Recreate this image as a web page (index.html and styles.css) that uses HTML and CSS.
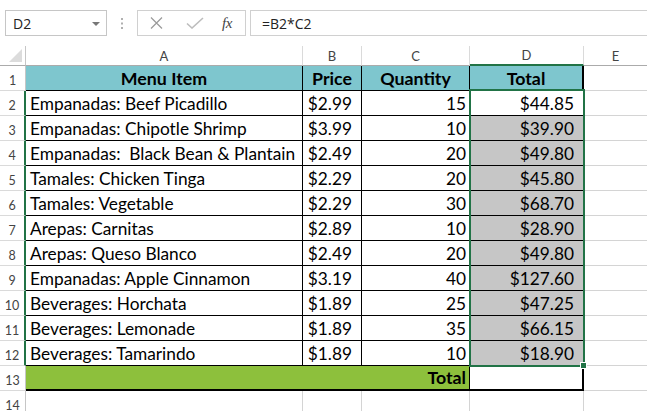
FILE: index.html
```html
<!DOCTYPE html>
<html>
<head>
<meta charset="utf-8">
<link rel="stylesheet" href="styles.css">
</head>
<body>
<div class="app">
  <div class="fbar">
    <div class="namebox"><span>D2</span><svg class="caret" width="8" height="4" viewBox="0 0 8 4"><path d="M0 0H8L4 4Z" fill="#777"/></svg></div>
    <div class="dots"><svg width="3" height="11" viewBox="0 0 3 11"><rect x="0" y="0" width="2" height="2" fill="#b0b0b0"/><rect x="0" y="4.5" width="2" height="2" fill="#b0b0b0"/><rect x="0" y="9" width="2" height="2" fill="#b0b0b0"/></svg></div>
    <div class="fnbox">
      <svg class="ic-x" width="13" height="12" viewBox="0 0 13 12"><path d="M1 0.5L12 11.5M12 0.5L1 11.5" stroke="#9a9a9a" stroke-width="1.2" fill="none"/></svg>
      <svg class="ic-ok" width="18" height="12" viewBox="0 0 18 12"><path d="M1 6.5L6 11L17 1" stroke="#bdbdbd" stroke-width="1.6" fill="none"/></svg>
      <span class="fx">fx</span>
    </div>
    <div class="formula">=B2*C2</div>
  </div>

  <div class="sheet">
    <div class="h corner"><svg width="13" height="13" viewBox="0 0 13 13"><path d="M13 0V13H0Z" fill="#dcdcdc"/></svg></div>
    <div class="h">A</div><div class="h">B</div><div class="h">C</div><div class="h hsel">D</div><div class="h">E</div>

    <div class="rh">1</div>
    <div class="c t th">Menu Item</div><div class="c t th">Price</div><div class="c t th">Quantity</div><div class="c t th dr">Total</div><div class="c"></div>

    <div class="rh sel">2</div>
    <div class="c t">Empanadas: Beef Picadillo</div><div class="c t r">$2.99</div><div class="c t n">15</div><div class="c t r">$44.85</div><div class="c"></div>

    <div class="rh sel">3</div>
    <div class="c t">Empanadas: Chipotle Shrimp</div><div class="c t r">$3.99</div><div class="c t n">10</div><div class="c t r g">$39.90</div><div class="c"></div>

    <div class="rh sel">4</div>
    <div class="c t">Empanadas:&nbsp; Black Bean &amp; Plantain</div><div class="c t r">$2.49</div><div class="c t n">20</div><div class="c t r g">$49.80</div><div class="c"></div>

    <div class="rh sel">5</div>
    <div class="c t">Tamales: Chicken Tinga</div><div class="c t r">$2.29</div><div class="c t n">20</div><div class="c t r g">$45.80</div><div class="c"></div>

    <div class="rh sel">6</div>
    <div class="c t">Tamales: Vegetable</div><div class="c t r">$2.29</div><div class="c t n">30</div><div class="c t r g">$68.70</div><div class="c"></div>

    <div class="rh sel">7</div>
    <div class="c t">Arepas: Carnitas</div><div class="c t r">$2.89</div><div class="c t n">10</div><div class="c t r g">$28.90</div><div class="c"></div>

    <div class="rh sel">8</div>
    <div class="c t">Arepas: Queso Blanco</div><div class="c t r">$2.49</div><div class="c t n">20</div><div class="c t r g">$49.80</div><div class="c"></div>

    <div class="rh sel">9</div>
    <div class="c t">Empanadas: Apple Cinnamon</div><div class="c t r">$3.19</div><div class="c t n">40</div><div class="c t r g">$127.60</div><div class="c"></div>

    <div class="rh sel">10</div>
    <div class="c t">Beverages: Horchata</div><div class="c t r">$1.89</div><div class="c t n">25</div><div class="c t r g">$47.25</div><div class="c"></div>

    <div class="rh sel">11</div>
    <div class="c t">Beverages: Lemonade</div><div class="c t r">$1.89</div><div class="c t n">35</div><div class="c t r g">$66.15</div><div class="c"></div>

    <div class="rh sel">12</div>
    <div class="c t">Beverages: Tamarindo</div><div class="c t r">$1.89</div><div class="c t n">10</div><div class="c t r g">$18.90</div><div class="c"></div>

    <div class="rh">13</div>
    <div class="c t tot">Total</div><div class="c t totd"></div><div class="c"></div>

    <div class="rh">14</div>
    <div class="c"></div><div class="c"></div><div class="c"></div><div class="c"></div><div class="c"></div>

    <div class="selection"></div>
    <div class="handle"></div>
  </div>
</div>
</body>
</html>
```

FILE: styles.css
```css
* { box-sizing: border-box; }
html, body { margin: 0; padding: 0; background: #fff; }
body { overflow: hidden; width: 647px; height: 411px; }

.app { font-family: Lato, "Open Sans", sans-serif; color: #000; }

/* formula bar */
.fbar {
  height: 46px;
  display: flex;
  align-items: flex-start;
  padding-top: 10px;
}
.namebox {
  margin-left: 5px;
  width: 102px;
  height: 26px;
  border: 1px solid #c6c6c6;
  display: flex;
  align-items: center;
  justify-content: space-between;
  padding: 0 6px 0 7px;
  font-family: "Open Sans", sans-serif;
  font-size: 14px;
  color: #222;
}
.caret { margin-top: 1px; }
.dots {
  width: 30px;
  height: 26px;
  display: flex;
  align-items: center;
  justify-content: center;
}
.fnbox {
  width: 109px;
  height: 26px;
  border: 1px solid #d0d0d0;
  display: flex;
  align-items: center;
  padding-left: 12px;
}
.ic-x { margin-right: 23px; }
.ic-ok { margin-right: 18px; }
.fx {
  font-family: "Liberation Serif", serif;
  font-style: italic;
  font-size: 15px;
  color: #444;
  letter-spacing: -0.5px;
}
.formula {
  margin-left: 4px;
  flex: 1;
  height: 26px;
  border: 1px solid #d0d0d0;
  border-right: none;
  padding-left: 11px;
  display: flex;
  align-items: center;
  font-family: "Open Sans", sans-serif;
  font-size: 14px;
  color: #222;
}

/* sheet */
.sheet {
  position: relative;
  display: grid;
  grid-template-columns: 26px 277px 59px 108px 114px 64px;
  grid-template-rows: 20px repeat(14, 25px);
}
.h {
  border-right: 1px solid #dadada;
  border-bottom: 1px solid #ababab;
  font-size: 13px;
  color: #444;
  display: flex;
  align-items: center;
  justify-content: center;
}
.corner {
  justify-content: flex-end;
  align-items: flex-end;
  padding: 0 3px 3px 0;
  border-right: 1px solid #c6c6c6;
}
.hsel { border-bottom: 2px solid #217346; }

.rh {
  border-right: 1px solid #c6c6c6;
  border-bottom: 1px solid #dadada;
  font-size: 12.5px;
  color: #444;
  display: flex;
  align-items: center;
  justify-content: center;
  padding-top: 4px;
}
.rh.sel { border-right: 2px solid #217346; }

.c {
  border-right: 1px solid #d4d4d4;
  border-bottom: 1px solid #d4d4d4;
  font-size: 17.3px;
  display: flex;
  align-items: flex-end;
  padding: 0 4px 1px 4px;
  white-space: nowrap;
  overflow: hidden;
}
.t { border-right-color: #000; border-bottom-color: #000; }
.th {
  background: #7ec6ce;
  font-weight: bold;
  font-size: 17.8px;
  justify-content: center;
}
.dr { border-right: 2px solid #000; }
.r { justify-content: flex-end; padding-right: 9px; }
.n { justify-content: flex-end; padding-right: 3px; }
.g { background: #c6c6c6; }
.tot {
  grid-column: span 3;
  background: #8dc03c;
  font-weight: bold;
  font-size: 17.8px;
  justify-content: flex-end;
  padding-right: 3px;
  border-bottom: 2px solid #000;
}
.totd {
  border-right: 2px solid #000;
  border-bottom: 2px solid #000;
}

.selection {
  position: absolute;
  left: 469px;
  top: 43px;
  width: 116px;
  height: 278px;
  border: 2px solid #217346;
  pointer-events: none;
}
.handle {
  position: absolute;
  left: 580px;
  top: 316px;
  width: 7px;
  height: 7px;
  background: #217346;
  border: 1px solid #fff;
}
```
